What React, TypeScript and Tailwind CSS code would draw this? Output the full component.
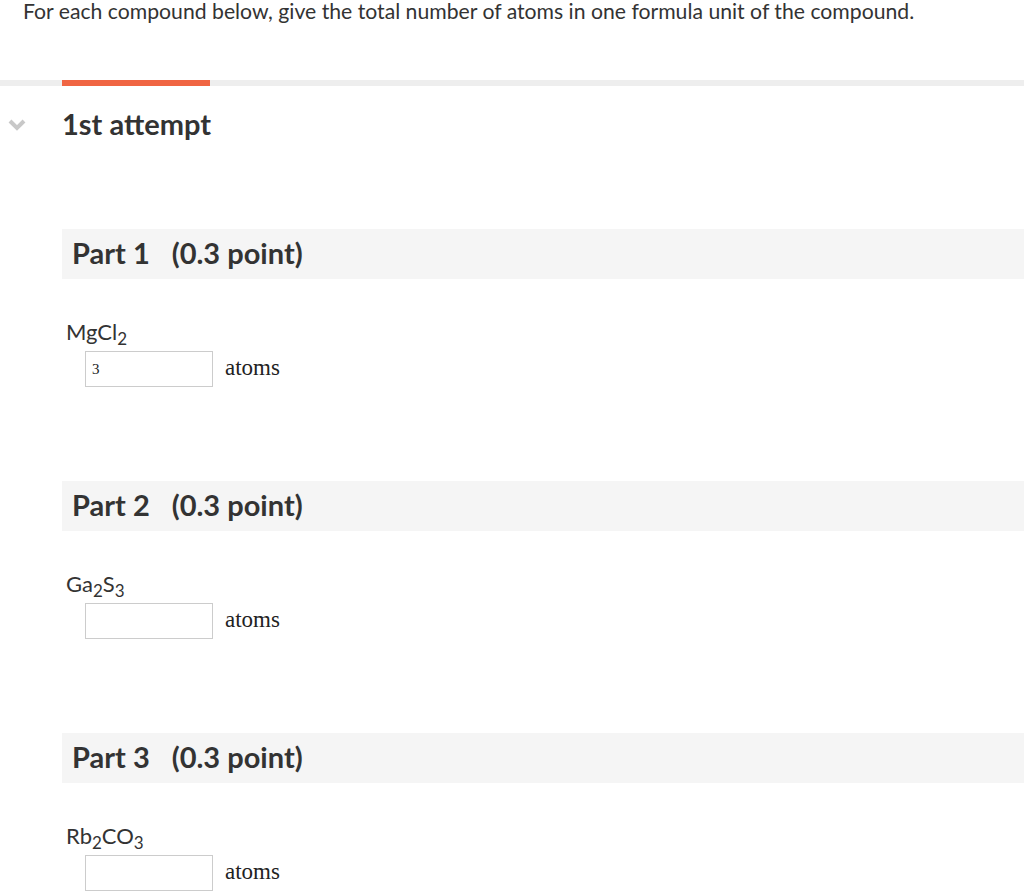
import React from "react";

const Chevron = () => (
  <svg width="18" height="12" viewBox="0 0 18 12" className="block">
    <path d="M2 2 L9 9 L16 2" fill="none" stroke="#c8c8c8" strokeWidth="4" strokeLinecap="butt" />
  </svg>
);

function Part({ n, formula, value }: { n: number; formula: React.ReactNode; value?: string }) {
  return (
    <div>
      <div className="h-[50px] bg-[#f5f5f5] flex items-center pl-[10px] pb-[3px]">
        <span className="text-[29px] font-bold text-[#333] leading-none">
          Part {n}
          <span className="ml-[22px]">(0.3 point)</span>
        </span>
      </div>
      <div className="pl-[4px] pt-[40px] text-[22px] leading-[26px] text-[#333] h-[72px]">{formula}</div>
      <div className="flex items-center pl-[23px]">
        <div className="w-[128px] h-[36px] border border-[#ccc] bg-white flex items-center pl-[6px] text-[15px] text-[#222]" style={{ fontFamily: '"Liberation Serif", serif' }}>
          {value}
        </div>
        <span className="ml-[12px] pb-[1px] text-[23px] text-[#222]" style={{ fontFamily: '"Liberation Serif", serif' }}>atoms</span>
      </div>
    </div>
  );
}

const Sub = ({ c }: { c: string }) => <span className="text-[17px] relative top-[5px]">{c}</span>;

export default function App() {
  return (
    <div className="w-[1024px] h-[895px] overflow-hidden bg-white" style={{ fontFamily: 'Lato, "Noto Sans", sans-serif' }}>
      <div className="pl-[23px] h-[80px]">
        <p className="text-[21.2px] leading-[22px] text-[#333]">
          For each compound below, give the total number of atoms in one formula unit of the compound.
        </p>
      </div>
      <div className="h-[6px] bg-[#eeeeee] relative">
        <div className="absolute left-[62px] top-0 w-[148px] h-[6px] bg-[#f06543]" />
      </div>
      <div className="flex items-center h-[78px]">
        <div className="w-[62px] pl-[8px]"><Chevron /></div>
        <span className="text-[29px] font-bold text-[#333] leading-none pb-[3px]">1st attempt</span>
      </div>
      <div className="pl-[62px] pt-[65px] flex flex-col gap-[94px]">
        <Part n={1} formula={<>MgCl<Sub c="2" /></>} value="3" />
        <Part n={2} formula={<>Ga<Sub c="2" />S<Sub c="3" /></>} />
        <Part n={3} formula={<>Rb<Sub c="2" />CO<Sub c="3" /></>} />
      </div>
    </div>
  );
}
